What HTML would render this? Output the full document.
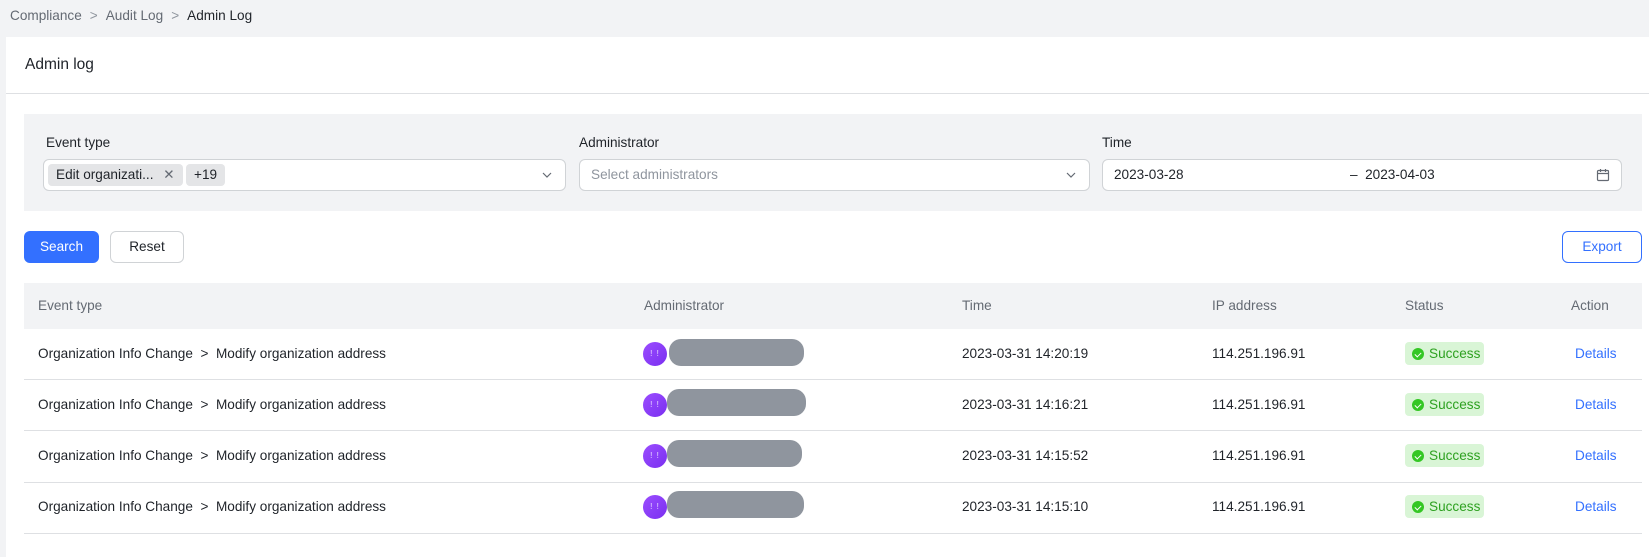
<!DOCTYPE html>
<html><head><meta charset="utf-8"><style>
*{box-sizing:border-box;margin:0;padding:0}
body{width:1649px;height:552px;background:#f2f3f5;font-family:"Liberation Sans",sans-serif;font-size:13.6px;color:#1f2329;position:relative;overflow:hidden}
.abs{position:absolute}
.bc{left:10px;top:6px;color:#646a73;font-size:13.6px;line-height:20px}
.bc b{font-weight:normal;color:#1f2329}
.bc i{font-style:normal;margin:0 8px;color:#8f959e}
.card{left:6px;top:37px;width:1643px;height:520px;background:#fff}
.title{left:25px;top:55px;font-size:15.5px;line-height:20px}
.hr{left:6px;top:93px;width:1643px;height:1px;background:#dee0e3}
.panel{left:24px;top:114px;width:1618px;height:97px;background:#f2f3f5}
.lbl{top:134px;line-height:18px}
.inp{top:159px;height:32px;background:#fff;border:1px solid #d0d3d6;border-radius:6px}
.chev{position:absolute;right:12px;top:9px;width:12px;height:12px}
.tag{position:absolute;top:4px;height:22px;background:#e4e5e7;border-radius:4px;line-height:22px;padding:0 8px}
.btn{top:231px;height:32px;border-radius:6px;line-height:30px;text-align:center}
.th{left:24px;top:283px;width:1618px;height:46px;background:#f2f3f5}
.h{top:297px;color:#646a73;line-height:18px}
.line{left:24px;width:1618px;height:1px;background:#dee0e3}
.c{line-height:18px}
.av{width:24px;height:24px;border-radius:50%;background:linear-gradient(135deg,#9b4dff,#7a2ff0);color:#e8d8ff;font-size:8px;text-align:center;line-height:24px;letter-spacing:1px}
.pill{height:27px;border-radius:12px;background:#8f959e}
.ok{width:79px;height:23px;background:#d9f5d6;border-radius:4px;color:#2ea121;line-height:24px;padding-left:24px}
.ok:before{content:"";position:absolute;left:7px;top:6px;width:12px;height:12px;border-radius:50%;background:#34c724}
.ok:after{content:"";position:absolute;left:11px;top:8.5px;width:3px;height:5px;border:solid #fff;border-width:0 1.5px 1.5px 0;transform:rotate(45deg)}
.dt{color:#3370ff}
</style></head><body>
<div class="abs bc">Compliance<i>&gt;</i>Audit Log<i>&gt;</i><b>Admin Log</b></div>
<div class="abs card"></div>
<div class="abs title">Admin log</div>
<div class="abs hr"></div>
<div class="abs panel"></div>
<div class="abs lbl" style="left:46px">Event type</div>
<div class="abs lbl" style="left:579px">Administrator</div>
<div class="abs lbl" style="left:1102px">Time</div>
<div class="abs inp" style="left:43px;width:523px">
 <div class="tag" style="left:4px">Edit organizati... <span style="color:#646a73;margin-left:6px">✕</span></div>
 <div class="tag" style="left:142px">+19</div>
 <svg class="chev" viewBox="0 0 12 12"><path d="M2 4l4 4 4-4" fill="none" stroke="#646a73" stroke-width="1.2"/></svg>
</div>
<div class="abs inp" style="left:579px;width:511px;padding-left:11px;line-height:30px;color:#8f959e">Select administrators
 <svg class="chev" viewBox="0 0 12 12"><path d="M2 4l4 4 4-4" fill="none" stroke="#646a73" stroke-width="1.2"/></svg>
</div>
<div class="abs inp" style="left:1102px;width:520px;line-height:30px">
 <span class="abs" style="left:11px">2023-03-28</span>
 <span class="abs" style="left:247px">–&nbsp; 2023-04-03</span>
 <svg class="abs" style="right:11px;top:8px" width="14" height="14" viewBox="0 0 14 14"><rect x="1.5" y="2.5" width="11" height="10" rx="1" fill="none" stroke="#646a73" stroke-width="1.2"/><path d="M1.5 5.5h11M4.5 1v3M9.5 1v3" stroke="#646a73" stroke-width="1.2"/></svg>
</div>
<div class="abs btn" style="left:24px;width:75px;background:#3370ff;color:#fff;line-height:32px">Search</div>
<div class="abs btn" style="left:110px;width:74px;border:1px solid #d0d3d6">Reset</div>
<div class="abs btn" style="left:1562px;width:80px;border:1px solid #3370ff;color:#3370ff">Export</div>
<div class="abs th"></div>
<div class="abs h" style="left:38px">Event type</div>
<div class="abs h" style="left:644px">Administrator</div>
<div class="abs h" style="left:962px">Time</div>
<div class="abs h" style="left:1212px">IP address</div>
<div class="abs h" style="left:1405px">Status</div>
<div class="abs h" style="left:1571px">Action</div>

<div class="abs c" style="left:38px;top:345px">Organization Info Change &nbsp;&gt;&nbsp; Modify organization address</div>
<div class="abs av" style="left:643px;top:342px">! !</div><div class="abs pill" style="left:669px;top:339px;width:135px"></div>
<div class="abs c" style="left:962px;top:345px">2023-03-31 14:20:19</div>
<div class="abs c" style="left:1212px;top:345px">114.251.196.91</div>
<div class="abs ok" style="left:1405px;top:342px">Success</div>
<div class="abs c dt" style="left:1575px;top:345px">Details</div>
<div class="abs line" style="top:379px"></div>

<div class="abs c" style="left:38px;top:396px">Organization Info Change &nbsp;&gt;&nbsp; Modify organization address</div>
<div class="abs av" style="left:643px;top:393px">! !</div><div class="abs pill" style="left:667px;top:389px;width:139px"></div>
<div class="abs c" style="left:962px;top:396px">2023-03-31 14:16:21</div>
<div class="abs c" style="left:1212px;top:396px">114.251.196.91</div>
<div class="abs ok" style="left:1405px;top:393px">Success</div>
<div class="abs c dt" style="left:1575px;top:396px">Details</div>
<div class="abs line" style="top:430px"></div>

<div class="abs c" style="left:38px;top:447px">Organization Info Change &nbsp;&gt;&nbsp; Modify organization address</div>
<div class="abs av" style="left:643px;top:444px">! !</div><div class="abs pill" style="left:667px;top:440px;width:135px"></div>
<div class="abs c" style="left:962px;top:447px">2023-03-31 14:15:52</div>
<div class="abs c" style="left:1212px;top:447px">114.251.196.91</div>
<div class="abs ok" style="left:1405px;top:444px">Success</div>
<div class="abs c dt" style="left:1575px;top:447px">Details</div>
<div class="abs line" style="top:482px"></div>

<div class="abs c" style="left:38px;top:498px">Organization Info Change &nbsp;&gt;&nbsp; Modify organization address</div>
<div class="abs av" style="left:643px;top:495px">! !</div><div class="abs pill" style="left:667px;top:491px;width:137px"></div>
<div class="abs c" style="left:962px;top:498px">2023-03-31 14:15:10</div>
<div class="abs c" style="left:1212px;top:498px">114.251.196.91</div>
<div class="abs ok" style="left:1405px;top:495px">Success</div>
<div class="abs c dt" style="left:1575px;top:498px">Details</div>
<div class="abs line" style="top:533px"></div>
</body></html>
